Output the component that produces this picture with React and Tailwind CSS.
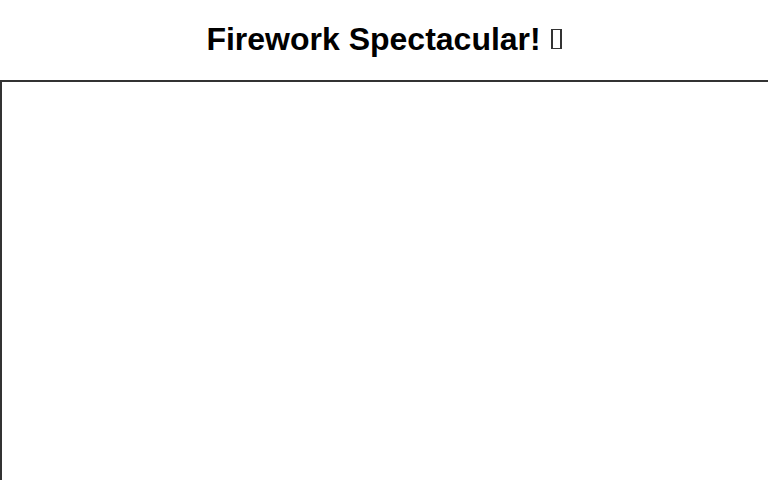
export default function App() {
  return (
    <div className="w-full h-[480px] overflow-hidden bg-white" style={{ fontFamily: '"Liberation Sans", Arial, sans-serif' }}>
      <h1 className="text-[32px] font-bold text-center leading-[37px] mt-[20.5px] mb-[22.5px] text-black">
        Firework Spectacular!{' '}
        <span
          role="img"
          aria-label="🎆"
          className="inline-block align-[1px] w-[11px] h-[20px] ml-[1px] border-x-2 border-y border-[#333]"
        />
      </h1>
      <div className="w-[800px] h-[600px] border-2 border-[#333] bg-white" />
    </div>
  );
}
